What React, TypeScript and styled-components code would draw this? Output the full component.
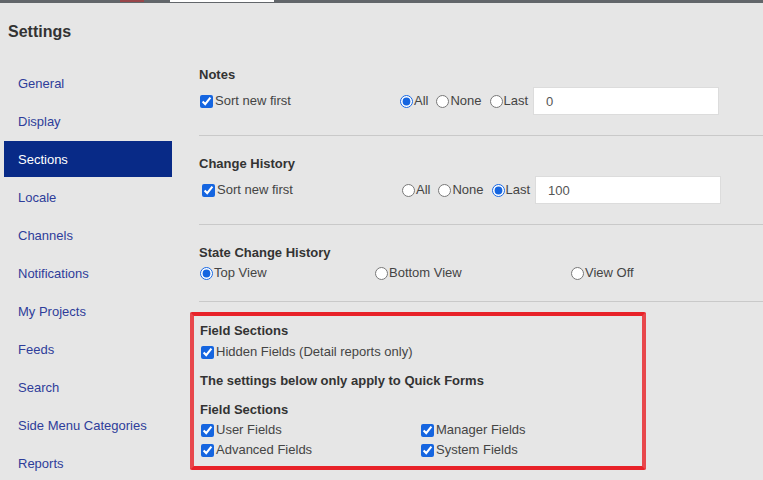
import React from 'react';
import styled, { createGlobalStyle } from 'styled-components';

const GlobalStyle = createGlobalStyle`
    html, body {
        margin: 0;
        padding: 0;
        background: #e6e6e6;
    }
    body {
        font-family: 'Liberation Sans', Arial, sans-serif;
        font-size: 13px;
        color: #444;
    }
`;

const navItems = [
    'General',
    'Display',
    'Sections',
    'Locale',
    'Channels',
    'Notifications',
    'My Projects',
    'Feeds',
    'Search',
    'Side Menu Categories',
    'Reports',
];

const Check: React.FC<{ label: string; checked?: boolean }> = ({ label, checked = true }) => (
    <Label>
        <CheckBox type="checkbox" defaultChecked={checked} />
        {label}
    </Label>
);

const Radio: React.FC<{ name: string; label: string; checked?: boolean }> = ({ name, label, checked }) => (
    <Label>
        <RadioInput type="radio" name={name} defaultChecked={checked} />
        {label}
    </Label>
);

export default function App() {
    return (
        <>
            <GlobalStyle />
            <TopBar>
                <TopMark />
                <TopTab />
            </TopBar>
            <Page>
                <Sidebar>
                    <Title>Settings</Title>
                    <Nav>
                        {navItems.map((item) => (
                            <NavItem key={item} active={item === 'Sections'}>
                                {item}
                            </NavItem>
                        ))}
                    </Nav>
                </Sidebar>
                <Content>
                    <Section>
                        <Heading>Notes</Heading>
                        <Row>
                            <CheckCol>
                                <Check label="Sort new first" />
                            </CheckCol>
                            <RadioGroup>
                                <Radio name="notes" label="All" checked />
                                <Radio name="notes" label="None" />
                                <Radio name="notes" label="Last" />
                                <NumberInput defaultValue="0" />
                            </RadioGroup>
                        </Row>
                    </Section>
                    <Section>
                        <Heading>Change History</Heading>
                        <Row indent={2}>
                            <CheckCol>
                                <Check label="Sort new first" />
                            </CheckCol>
                            <RadioGroup>
                                <Radio name="history" label="All" />
                                <Radio name="history" label="None" />
                                <Radio name="history" label="Last" checked />
                                <NumberInput defaultValue="100" />
                            </RadioGroup>
                        </Row>
                    </Section>
                    <Section>
                        <Heading>State Change History</Heading>
                        <ViewRow>
                            <Radio name="state" label="Top View" checked />
                            <Radio name="state" label="Bottom View" />
                            <Radio name="state" label="View Off" />
                        </ViewRow>
                    </Section>
                    <Highlight>
                        <Heading>Field Sections</Heading>
                        <Check label="Hidden Fields (Detail reports only)" />
                        <Heading spaced>The settings below only apply to Quick Forms</Heading>
                        <Heading spaced>Field Sections</Heading>
                        <FieldGrid>
                            <Check label="User Fields" />
                            <Check label="Manager Fields" />
                            <Check label="Advanced Fields" />
                            <Check label="System Fields" />
                        </FieldGrid>
                    </Highlight>
                </Content>
            </Page>
        </>
    );
}

const TopBar = styled.div`
    display: flex;
    height: 3px;
    background: #62666a;
    overflow: hidden;
`;
const TopMark = styled.div`
    width: 24px;
    height: 2px;
    margin: 0 26px 0 120px;
    background: #b0393d;
    opacity: 0.7;
`;
const TopTab = styled.div`
    width: 104px;
    background: #fff;
    margin-bottom: 1px;
`;
const Page = styled.div`
    display: flex;
    height: 477px;
    overflow: hidden;
`;
const Sidebar = styled.div`
    width: 172px;
    flex-shrink: 0;
    padding-top: 21px;
`;
const Title = styled.h1`
    margin: 0 0 25px 8px;
    font-size: 16px;
    line-height: 16px;
    font-weight: bold;
    color: #333;
`;
const Nav = styled.nav`
    display: flex;
    flex-direction: column;
    gap: 2px;
    padding-left: 4px;
`;
const NavItem = styled.div<{ active?: boolean }>`
    height: 36px;
    display: flex;
    align-items: center;
    padding-left: 14px;
    color: ${(p) => (p.active ? '#fff' : '#2e3d9a')};
    background: ${(p) => (p.active ? '#082a87' : 'transparent')};
`;
const Content = styled.div`
    flex: 1;
    padding: 44px 0 0 27px;
    display: flex;
    flex-direction: column;
`;
const Section = styled.div`
    display: flex;
    flex-direction: column;
    gap: 4px;
    padding: 20px 0;
    border-bottom: 1px solid #c9c9c9;
`;
const Heading = styled.div<{ spaced?: boolean }>`
    font-weight: bold;
    color: #333;
    line-height: 16px;
    margin-top: ${(p) => (p.spaced ? '8px' : '0')};
`;
const Row = styled.div<{ indent?: number }>`
    display: flex;
    align-items: center;
    padding-left: ${(p) => p.indent || 0}px;
`;
const CheckCol = styled.div`
    width: 200px;
`;
const RadioGroup = styled.div`
    display: flex;
    align-items: center;
    gap: 7px;
`;
const Label = styled.label`
    display: flex;
    align-items: center;
    line-height: 16px;
    color: #444;
    white-space: nowrap;
`;
const CheckBox = styled.input`
    width: 13px;
    height: 13px;
    margin: 0 2px 0 1px;
    accent-color: #1565e0;
`;
const RadioInput = styled.input`
    width: 13px;
    height: 13px;
    margin: 0 1px 0 1px;
    accent-color: #1565e0;
`;
const NumberInput = styled.input`
    width: 186px;
    height: 28px;
    box-sizing: border-box;
    border: 1px solid #dcdcdc;
    background: #fff;
    padding: 0 12px;
    margin-left: -2px;
    font-family: 'Liberation Sans', Arial, sans-serif;
    font-size: 13px;
    color: #555;
    outline: none;
`;
const ViewRow = styled.div`
    display: grid;
    grid-template-columns: 175px 196px auto;
    align-items: center;
`;
const Highlight = styled.div`
    align-self: flex-start;
    margin: 10px 0 0 -9px;
    width: 456px;
    height: 158px;
    box-sizing: border-box;
    border: 4px solid #e82229;
    border-left-color: #e8474c;
    border-right-color: #e8474c;
    border-radius: 2px;
    padding: 7px 6px;
    display: flex;
    flex-direction: column;
    gap: 5px;
`;
const FieldGrid = styled.div`
    display: grid;
    grid-template-columns: 220px auto;
    row-gap: 4px;
    margin-top: -1px;
`;
